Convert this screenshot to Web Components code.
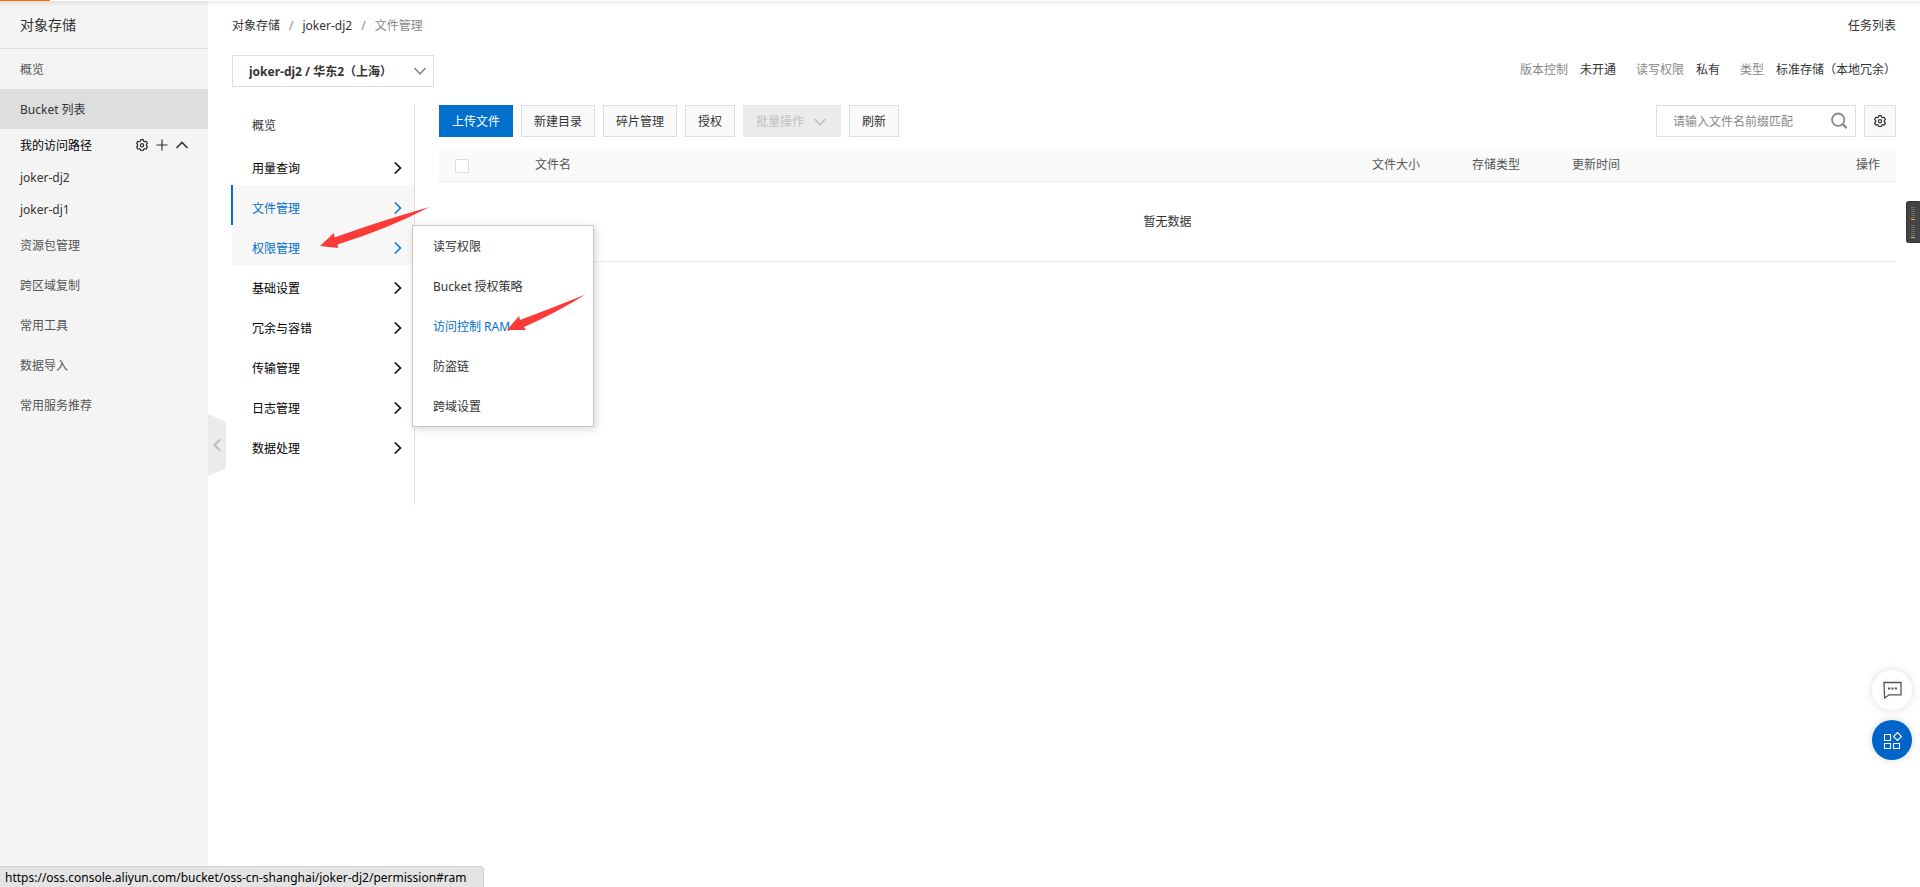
<!DOCTYPE html>
<html lang="zh-CN">
<head>
<meta charset="utf-8">
<title>对象存储</title>
<style>
    html, body { height: 100%; }
    body {
        margin: 0;
        background: #fff;
        color: #333;
        font: 12px/20px "Noto Sans", "Noto Sans CJK SC", sans-serif;
    }
</style>
</head>
<body>

<oss-console>
    <oss-sidebar slot="sidebar" heading="对象存储">
        <side-item>概览</side-item>
        <side-item selected>Bucket 列表</side-item>
        <side-paths label="我的访问路径">
            <side-item small>joker-dj2</side-item>
            <side-item small>joker-dj1</side-item>
        </side-paths>
        <side-item>资源包管理</side-item>
        <side-item>跨区域复制</side-item>
        <side-item>常用工具</side-item>
        <side-item>数据导入</side-item>
        <side-item>常用服务推荐</side-item>
    </oss-sidebar>

    <page-header></page-header>
    <bucket-bar></bucket-bar>

    <bucket-layout>
        <bucket-nav slot="nav">
            <nav-item>概览</nav-item>
            <nav-item group>用量查询</nav-item>
            <nav-item group active current>文件管理</nav-item>
            <nav-item group active>权限管理
                <nav-popup slot="popup">
                    <a href="#acl">读写权限</a>
                    <a href="#policy">Bucket 授权策略</a>
                    <a href="#ram" class="active">访问控制 RAM</a>
                    <a href="#referer">防盗链</a>
                    <a href="#cors">跨域设置</a>
                </nav-popup>
            </nav-item>
            <nav-item group>基础设置</nav-item>
            <nav-item group>冗余与容错</nav-item>
            <nav-item group>传输管理</nav-item>
            <nav-item group>日志管理</nav-item>
            <nav-item group>数据处理</nav-item>
        </bucket-nav>
        <file-toolbar></file-toolbar>
        <file-table></file-table>
    </bucket-layout>
</oss-console>

<float-tools></float-tools>
<level-meter></level-meter>
<red-arrows></red-arrows>
<status-bar>https://oss.console.aliyun.com/bucket/oss-cn-shanghai/joker-dj2/permission#ram</status-bar>

<script>
(function() {
    "use strict";

    // Rules every shadow root starts with
    const base = `
        *, *::before, *::after { box-sizing: border-box; }
        :host { display: block; box-sizing: border-box; }
        a { color: inherit; text-decoration: none; }
        button, input, select { margin: 0; font: inherit; color: inherit; border-radius: 0; }
        button { padding: 0; border: 0; background: none; cursor: pointer; }
    `;

    function define(name, template) {
        window.customElements.define(name, class extends HTMLElement {
            constructor() {
                super();
                this.attachShadow({mode: 'open'});
            }

            connectedCallback() {
                const html = typeof template === 'function' ? template(this) : template;
                this.shadowRoot.innerHTML = `<style>${base}</style>${html}`;
            }
        });
    }

    const icons = {
        right: '<path d="M4.800 2.500l5.700 5.500-5.700 5.500" stroke-width="1.500"/>',
        left: '<path d="M11 2.500L5.500 8l5.500 5.500" stroke-width="1.800"/>',
        down: '<path d="M2.500 5L8 10.800 13.500 5" stroke-width="1.600"/>',
        up: '<path d="M2.500 11L8 5.500 13.500 11" stroke-width="1.600"/>',
        plus: '<path d="M8 2.500v11M2.500 8h11" stroke-width="1.200"/>',
        gear: '<path d="M6.800 2.700h2.400l.5 1.500 1 .5 1.500-.3 1.200 2.100-1 1v1.400l1 1-1.200 2.100-1.500-.3-1 .5-.5 1.300H6.800l-.5-1.300-1-.5-1.500.3-1.200-2.100 1-1V7.500l-1-1 1.200-2.100 1.500.3 1-.5z" stroke-width="1.200"/><circle cx="8" cy="8.200" r="1.600" stroke-width="1.200"/>',
        search: '<circle cx="7.200" cy="6.700" r="6.200" stroke-width="1.800"/><path d="M11.600 11.100l4 4" stroke-width="2.200"/>',
        chat: '<path d="M0 .5h17v12.300H5.200L.6 16z" stroke-width="1.300"/><path d="M4 6.600h2.200M7.400 6.600h2.200M10.800 6.600H13" stroke-width="2"/>',
        apps: '<path d="M1.500 3.500h6v6h-6zM1.500 12.500h6v5h-6zM10.500 12.500h6v5h-6zM14.500 1.500l4 4-4 4-4-4z" stroke-width="1.100"/>'
    };

    define('oss-icon', el => {
        const size = el.getAttribute('size') || 16;
        return `
            <style>
                :host { display: inline-block; flex: none; line-height: 0; }
                svg { fill: none; stroke: currentColor; overflow: visible; }
            </style>
            <svg width="${size}" height="${size}" viewBox="0 0 ${size} ${size}" aria-hidden="true">${icons[el.getAttribute('name')]}</svg>`;
    });

    // Page frame
    define('oss-console', `
        <style>
            :host { display: flex; min-height: 100vh; position: relative; }
            .loading { position: absolute; inset: 0 0 auto 0; height: 1px; background: #fff; box-shadow: 0 1px 4px rgba(0, 20, 20, .4); }
            .loading i { display: block; width: 50px; height: 1px; background: #ff6a00; }
            main { flex: 1; min-width: 0; padding: 0 24px; }
        </style>
        <slot name="sidebar"></slot>
        <main><slot></slot></main>
        <div class="loading"><i></i></div>`);

    define('oss-sidebar', el => `
        <style>
            :host { width: 208px; flex: none; position: relative; background: #f4f4f4; color: #555; }
            h1 { margin: 0; height: 49px; padding-top: 1px; padding-left: 20px; border-bottom: 1px solid #dedede; font-size: 14px; font-weight: normal; line-height: 48px; color: #333; }
            .fold { position: absolute; left: 100%; top: 414px; display: grid; place-items: center; width: 18px; height: 62px; background: #ebebeb; color: #bbb; clip-path: polygon(0 0, 100% 8px, 100% 54px, 0 100%); }
        </style>
        <h1>${el.getAttribute('heading')}</h1>
        <nav><slot></slot></nav>
        <button class="fold" aria-label="收起"><oss-icon name="left"></oss-icon></button>`);

    define('side-item', `
        <style>
            a { display: block; height: 40px; padding: 0 20px; line-height: 42px; }
            :host([selected]) { background: #dedede; color: #333; }
            :host([small]) { color: #333; }
            :host([small]) a { height: 32px; line-height: 34px; }
        </style>
        <a href="#"><slot></slot></a>`);

    define('side-paths', el => `
        <style>
            .head { display: flex; align-items: center; height: 32px; padding: 0 18px 0 20px; gap: 4px; color: #000; }
            .head span { flex: 1; line-height: 22px; padding-top: 2px; }
            button { display: flex; color: #333; }
        </style>
        <div class="head">
            <span>${el.getAttribute('label')}</span>
            <button aria-label="设置"><oss-icon name="gear"></oss-icon></button>
            <button aria-label="添加"><oss-icon name="plus"></oss-icon></button>
            <button aria-label="收起"><oss-icon name="up"></oss-icon></button>
        </div>
        <slot></slot>`);

    define('page-header', `
        <style>
            :host { display: flex; justify-content: space-between; align-items: center; height: 51px; }
            nav { display: flex; gap: 9px; }
            i { font-style: normal; color: #888; }
            .here { color: #888; }
        </style>
        <nav aria-label="路径">
            <a href="#">对象存储</a><i>/</i><a href="#">joker-dj2</a><i>/</i><span class="here">文件管理</span>
        </nav>
        <a href="#tasks">任务列表</a>`);

    define('bucket-bar', `
        <style>
            :host { display: flex; justify-content: space-between; align-items: center; padding-top: 4px; }
            .picker { display: grid; width: 202px; height: 32px; }
            .picker > * { grid-area: 1 / 1; }
            select { appearance: none; width: 100%; height: 100%; border: 1px solid #dedede; background: #fff; padding: 2px 32px 0 16px; font-weight: bold; }
            oss-icon { align-self: center; justify-self: end; margin-right: 6px; color: #888; pointer-events: none; }
            dl { display: flex; gap: 12px; margin: 0; padding-bottom: 2px; }
            dt { color: #888; }
            dt:not(:first-child) { margin-left: 8px; }
            dd { margin: 0; }
        </style>
        <div class="picker">
            <select aria-label="Bucket"><option>joker-dj2 / 华东2（上海）</option></select>
            <oss-icon name="down"></oss-icon>
        </div>
        <dl>
            <dt>版本控制</dt><dd>未开通</dd>
            <dt>读写权限</dt><dd>私有</dd>
            <dt>类型</dt><dd>标准存储（本地冗余）</dd>
        </dl>`);

    define('bucket-layout', `
        <style>
            :host { display: flex; align-items: flex-start; gap: 24px; padding-top: 18px; }
            .content { flex: 1; min-width: 0; }
        </style>
        <slot name="nav"></slot>
        <div class="content"><slot></slot></div>`);

    define('bucket-nav', `
        <style>
            :host { width: 183px; flex: none; padding-bottom: 40px; border-right: 1px solid #dedede; }
        </style>
        <nav><slot></slot></nav>`);

    define('nav-item', el => `
        <style>
            :host { position: relative; height: 40px; }
            a { display: flex; align-items: center; justify-content: space-between; height: 40px; padding: 0 8px 0 20px; }
            span { padding-top: 2px; }
            :host([group]) { color: #000; }
            :host([group]) a { padding-top: 6px; }
            :host([active]) { background: #f7f7f7; color: #0070cc; }
            :host([current])::before { content: ""; position: absolute; left: -1px; top: 0; bottom: 0; width: 2px; background: #0070cc; }
        </style>
        <a href="#"><span><slot></slot></span>${el.hasAttribute('group') ? '<oss-icon name="right"></oss-icon>' : ''}</a>
        <slot name="popup"></slot>`);

    define('nav-popup', `
        <style>
            :host { position: absolute; z-index: 1; left: 180px; top: 0; width: 182px; border: 1px solid #c8c8c8; background: #fff; box-shadow: 2px 2px 8px rgba(0, 0, 0, .16); color: #333; }
            ::slotted(a) { display: block; height: 40px; padding: 0 20px; line-height: 42px; color: inherit; text-decoration: none; }
            ::slotted(a.active) { color: #0070cc; }
        </style>
        <slot></slot>`);

    define('file-toolbar', `
        <style>
            :host { display: flex; justify-content: space-between; height: 32px; }
            div { display: flex; gap: 8px; }
            button { display: flex; align-items: center; gap: 8px; padding: 2px 12px 0; border: 1px solid #dedede; background: #fafafa; }
            .primary { background: #0070cc; border-color: #0070cc; color: #fff; }
            button:disabled { background: #ebebeb; border-color: #ebebeb; color: #c1c1c1; }
            .search { display: flex; align-items: center; gap: 4px; width: 200px; padding: 0 8px 0 16px; border: 1px solid #dedede; color: #888; }
            input { flex: 1; min-width: 0; padding: 2px 0 0; border: 0; outline: 0; background: none; color: #333; }
            input::placeholder { color: #888; opacity: 1; }
            .search button { padding: 0; border: 0; background: none; }
            .square { width: 32px; padding: 0; justify-content: center; }
        </style>
        <div>
            <button class="primary">上传文件</button>
            <button>新建目录</button>
            <button>碎片管理</button>
            <button>授权</button>
            <button disabled>批量操作<oss-icon name="down"></oss-icon></button>
            <button>刷新</button>
        </div>
        <div>
            <form class="search">
                <input type="text" aria-label="文件名前缀" placeholder="请输入文件名前缀匹配">
                <button type="button" aria-label="搜索"><oss-icon name="search"></oss-icon></button>
            </form>
            <button class="square" aria-label="设置"><oss-icon name="gear"></oss-icon></button>
        </div>`);

    define('file-table', `
        <style>
            :host { padding-top: 12px; }
            table { width: 100%; table-layout: fixed; border-collapse: separate; border-spacing: 0; }
            th, td { padding: 0 16px; border-bottom: 1px solid #ebebeb; }
            th { height: 33px; background: #fafafa; color: #555; font-weight: normal; text-align: left; }
            td { height: 80px; text-align: center; }
            .check { width: 80px; }
            .size, .kind { width: 100px; }
            .time { width: 170px; }
            .ops { width: 170px; text-align: right; }
            input { appearance: none; display: block; width: 14px; height: 14px; margin-top: 2px; border: 1px solid #dedede; background: #fff; }
        </style>
        <table>
            <thead>
                <tr>
                    <th class="check"><input type="checkbox" aria-label="全选"></th>
                    <th>文件名</th>
                    <th class="size">文件大小</th>
                    <th class="kind">存储类型</th>
                    <th class="time">更新时间</th>
                    <th class="ops">操作</th>
                </tr>
            </thead>
            <tbody><tr><td colspan="6">暂无数据</td></tr></tbody>
        </table>`);

    // Things floating over the page
    define('float-tools', `
        <style>
            :host { position: fixed; right: 8px; bottom: 127px; display: grid; gap: 10px; }
            button { display: grid; place-items: center; width: 40px; height: 40px; border-radius: 50%; background: #fff; color: #555; box-shadow: 0 0 8px rgba(0, 0, 0, .15); }
            .apps { background: #0064c8; color: #fff; }
        </style>
        <button aria-label="咨询"><oss-icon name="chat" size="17"></oss-icon></button>
        <button class="apps" aria-label="应用"><oss-icon name="apps" size="18"></oss-icon></button>`);

    define('level-meter', `
        <style>
            :host { position: fixed; right: 0; top: 201px; display: grid; align-content: start; gap: 5px; width: 14px; height: 42px; padding: 5px 0 0 4px; border: 1px solid #333; border-right: 0; border-radius: 3px 0 0 3px; background: #444; }
            i { display: block; width: 4px; height: 13px; background: repeating-linear-gradient(#6b6b6b 0 1px, transparent 1px 2px); border-bottom: 1px solid #ffa62b; }
            i + i { border-color: #8fe02a; }
        </style>
        <i></i><i></i>`);

    define('red-arrows', `
        <style>
            :host { position: absolute; z-index: 2; left: 320px; top: 206px; pointer-events: none; line-height: 0; }
            path { fill: #fb3b38; }
        </style>
        <svg width="268" height="126" viewBox="0 0 268 126" aria-hidden="true">
            <path d="M0 40L14 27l.5 4.500Q60 15 109.500 1 70 22 17.500 38.500l.5 3.500z"/>
            <path d="M187 124l12-14 1 4Q232 102 265.500 88.500 236 107 204 121l2 3z"/>
        </svg>`);

    define('status-bar', `
        <style>
            :host { position: fixed; z-index: 3; left: 0; bottom: 0; height: 21px; padding: 0 16px 0 5px; border: solid #d0d0d0; border-width: 1px 1px 0 0; border-radius: 0 4px 0 0; background: #e4e4e4; color: #000; line-height: 22px; }
        </style>
        <slot></slot>`);

})();
</script>
</body>
</html>
